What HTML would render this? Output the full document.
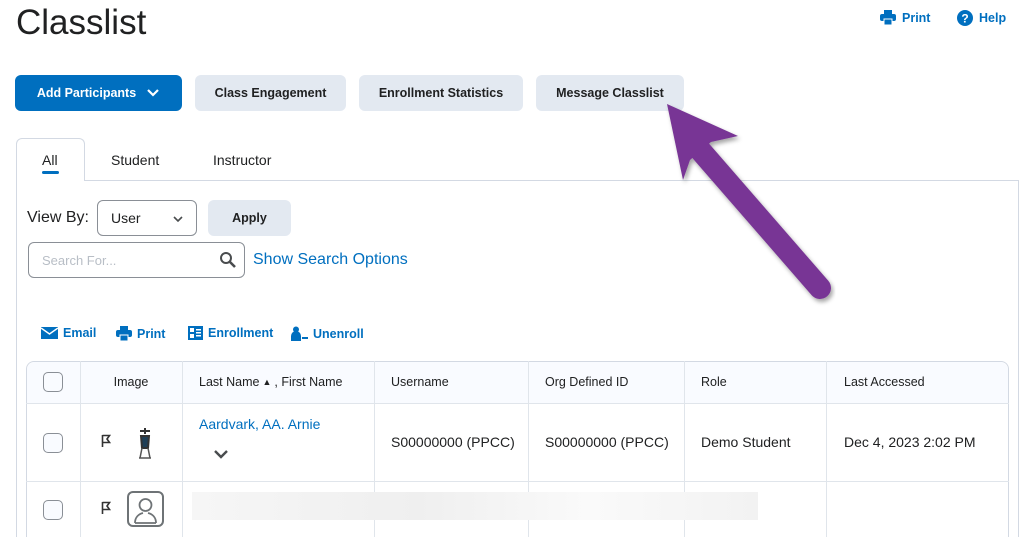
<!DOCTYPE html>
<html><head><meta charset="utf-8"><style>
*{box-sizing:border-box;margin:0;padding:0}
html,body{width:1024px;height:537px;overflow:hidden}
body{background:#fff;font-family:"Liberation Sans",sans-serif;color:#202122;position:relative}
.a{position:absolute}
.btn{position:absolute;top:75px;height:36px;border-radius:6px;background:#e3e9f1;font-size:12.5px;font-weight:bold;display:flex;align-items:center;justify-content:center;color:#202122}
.lnk{color:#006fbf;font-weight:bold;font-size:12.5px}
.th{position:absolute;top:361px;height:42px;font-size:12.5px;display:flex;align-items:center;color:#202122}
.td{position:absolute;font-size:14px;display:flex;align-items:center}
.cb{position:absolute;width:20px;height:20px;border:1px solid #8a8f96;border-radius:5px;background:#f9fbff}
.vl{position:absolute;width:1px;background:#e0e5eb;top:361px;height:176px}
.hl{position:absolute;height:1px;background:#e0e5eb;left:26px;width:983px}
</style></head><body>
<div class="a" style="left:16px;top:3px;font-size:35px;color:#202122">Classlist</div>
<div class="a lnk" style="left:880px;top:10px;display:flex;align-items:center;gap:6px"><svg width="16" height="15" viewBox="0 0 16 15"><rect x="4" y="0" width="8" height="4" fill="#006fbf"/><rect x="0" y="4" width="16" height="7" rx="2" fill="#006fbf"/><rect x="4" y="9" width="8" height="6" fill="#006fbf" stroke="#fff" stroke-width="1"/></svg>Print</div>
<div class="a lnk" style="left:957px;top:10px;display:flex;align-items:center;gap:6px"><svg width="16" height="16"><circle cx="8" cy="8" r="8" fill="#006fbf"/><text x="8" y="12.5" font-size="12" font-weight="bold" fill="#fff" text-anchor="middle" font-family="Liberation Sans">?</text></svg>Help</div>

<div class="btn" style="left:15px;width:167px;background:#006fbf;color:#fff">Add Participants<svg width="14" height="10" style="margin-left:10px" viewBox="0 0 14 10"><path d="M2 2l5 5 5-5" stroke="#fff" stroke-width="2.2" fill="none"/></svg></div>
<div class="btn" style="left:195px;width:151px">Class Engagement</div>
<div class="btn" style="left:359px;width:164px">Enrollment Statistics</div>
<div class="btn" style="left:536px;width:148px">Message Classlist</div>

<div class="a" style="left:16px;top:180px;width:1003px;height:1px;background:#d3d9e3"></div>
<div class="a" style="left:16px;top:180px;width:1px;height:357px;background:#d3d9e3"></div>
<div class="a" style="left:1018px;top:180px;width:1px;height:357px;background:#d3d9e3"></div>
<div class="a" style="left:16px;top:138px;width:69px;height:43px;border:1px solid #d3d9e3;border-bottom:none;border-radius:6px 6px 0 0;background:#fff"></div>
<div class="a" style="left:42px;top:152px;font-size:14px">All</div>
<div class="a" style="left:42px;top:171px;width:17px;height:3px;border-radius:2px;background:#006fbf"></div>
<div class="a" style="left:111px;top:152px;font-size:14px">Student</div>
<div class="a" style="left:213px;top:152px;font-size:14px">Instructor</div>

<div class="a" style="left:27px;top:209px;font-size:16px">View By:</div>
<div class="a" style="left:97px;top:200px;width:100px;height:36px;border:1px solid #8a8f96;border-radius:6px;font-size:14px;padding:9px 0 0 13px">User<svg class="a" style="left:74px;top:14px" width="12" height="8"><path d="M2 2l4 4 4-4" stroke="#494c4e" stroke-width="1.6" fill="none"/></svg></div>
<div class="btn" style="left:208px;top:200px;width:83px;height:36px;font-size:12.5px">Apply</div>
<div class="a" style="left:28px;top:242px;width:217px;height:36px;border:1px solid #8a8f96;border-radius:6px;font-size:13px;color:#b8bec6;padding:10px 0 0 13px">Search For...<svg class="a" style="left:190px;top:8px" width="18" height="18"><circle cx="7" cy="7" r="5" stroke="#494c4e" stroke-width="2" fill="none"/><path d="M11 11l5 5" stroke="#494c4e" stroke-width="2.6"/></svg></div>
<div class="a" style="left:253px;top:251px;font-size:16px;color:#006fbf">Show Search Options</div>

<div class="a lnk" style="left:41px;top:326px;display:flex;align-items:center;gap:5px"><svg width="17" height="12"><rect width="17" height="12" fill="#006fbf"/><path d="M0 1l8.5 6 8.5-6" stroke="#fff" stroke-width="1.5" fill="none"/></svg>Email</div>
<div class="a lnk" style="left:116px;top:326px;display:flex;align-items:center;gap:5px"><svg width="16" height="15"><rect x="4" y="0" width="8" height="4" fill="#006fbf"/><rect x="0" y="4" width="16" height="7" rx="2" fill="#006fbf"/><rect x="4" y="9" width="8" height="6" fill="#006fbf" stroke="#fff"/></svg>Print</div>
<div class="a lnk" style="left:188px;top:326px;display:flex;align-items:center;gap:5px"><svg width="15" height="14"><rect width="15" height="14" fill="#006fbf"/><rect x="2" y="2" width="4" height="4" fill="#fff"/><rect x="2" y="8" width="4" height="4" fill="#fff"/><rect x="8" y="3" width="5" height="1.5" fill="#fff"/><rect x="8" y="6" width="5" height="1.5" fill="#fff"/><rect x="8" y="9" width="5" height="1.5" fill="#fff"/></svg>Enrollment</div>
<div class="a lnk" style="left:291px;top:326px;display:flex;align-items:center;gap:5px"><svg width="17" height="15"><circle cx="5" cy="3.5" r="3" fill="#006fbf"/><path d="M0 15v-5a5 5 0 0110 0v5z" fill="#006fbf"/><rect x="11" y="11" width="6" height="2" fill="#006fbf"/></svg>Unenroll</div>

<div class="a" style="left:26px;top:361px;width:983px;height:176px;border:1px solid #d3d9e3;border-bottom:none;border-radius:8px 8px 0 0"></div>
<div class="a" style="left:27px;top:362px;width:981px;height:41px;background:#f9fbff;border-radius:8px 8px 0 0"></div>
<div class="hl" style="top:403px"></div>
<div class="hl" style="top:481px"></div>
<div class="vl" style="left:80px"></div><div class="vl" style="left:182px"></div><div class="vl" style="left:374px"></div><div class="vl" style="left:528px"></div><div class="vl" style="left:684px"></div><div class="vl" style="left:826px"></div>
<div class="cb" style="left:43px;top:372px"></div>
<div class="th" style="left:80px;width:102px;justify-content:center">Image</div>
<div class="th" style="left:199px">Last Name <span style="font-size:9px;margin:0 3px">▲</span>, First Name</div>
<div class="th" style="left:391px">Username</div>
<div class="th" style="left:545px">Org Defined ID</div>
<div class="th" style="left:701px">Role</div>
<div class="th" style="left:844px">Last Accessed</div>

<div class="cb" style="left:43px;top:433px"></div>
<svg class="a" style="left:101px;top:434px" width="11" height="14"><path d="M1.5 1v12M1.5 1.5h7l-2.5 3.5 2.5 3.5h-7" stroke="#333" stroke-width="1.6" fill="none"/></svg>
<svg class="a" style="left:136px;top:426px" width="18" height="34"><path d="M9 2v6M4 5h10M5 10h8l-1 12H6z" stroke="#333" stroke-width="2" fill="#1f3f57"/><path d="M6 22l-2 10M12 22l2 10M3 32h12" stroke="#555" stroke-width="1.5"/></svg>
<div class="td" style="left:199px;top:416px;color:#006fbf">Aardvark, AA. Arnie</div>
<svg class="a" style="left:213px;top:449px" width="16" height="10"><path d="M2 2l6 6 6-6" stroke="#494c4e" stroke-width="2.4" fill="none"/></svg>
<div class="td" style="left:391px;top:434px">S00000000 (PPCC)</div>
<div class="td" style="left:545px;top:434px">S00000000 (PPCC)</div>
<div class="td" style="left:701px;top:434px">Demo Student</div>
<div class="td" style="left:844px;top:434px">Dec 4, 2023 2:02 PM</div>

<div class="cb" style="left:43px;top:500px"></div>
<svg class="a" style="left:101px;top:501px" width="11" height="14"><path d="M1.5 1v12M1.5 1.5h7l-2.5 3.5 2.5 3.5h-7" stroke="#333" stroke-width="1.6" fill="none"/></svg>
<div class="a" style="left:127px;top:491px;width:37px;height:36px;border:2px solid #6e7376;border-radius:6px"><svg width="33" height="32"><circle cx="16.5" cy="12" r="6" stroke="#6e7376" stroke-width="1.8" fill="none"/><path d="M6 30c0-6 4-9 8-10M27 30c0-6-4-9-8-10M6 30h21" stroke="#6e7376" stroke-width="1.8" fill="none"/></svg></div>
<div class="a" style="left:192px;top:492px;width:566px;height:28px;background:linear-gradient(90deg,#f6f6f6,#efefef 40%,#fafafa 70%,#f2f2f2)"></div>

<svg class="a" style="left:650px;top:95px" width="200" height="215" viewBox="650 95 200 215">
<defs><filter id="s"><feDropShadow dx="2" dy="3" stdDeviation="2" flood-color="#000" flood-opacity="0.35"/></filter></defs>
<g filter="url(#s)" fill="#783595">
<path d="M667 104L738 136L711 142L690 160L683 180Z"/>
<line x1="700" y1="150" x2="820" y2="288" stroke="#783595" stroke-width="22" stroke-linecap="round"/>
</g></svg>
</body></html>
